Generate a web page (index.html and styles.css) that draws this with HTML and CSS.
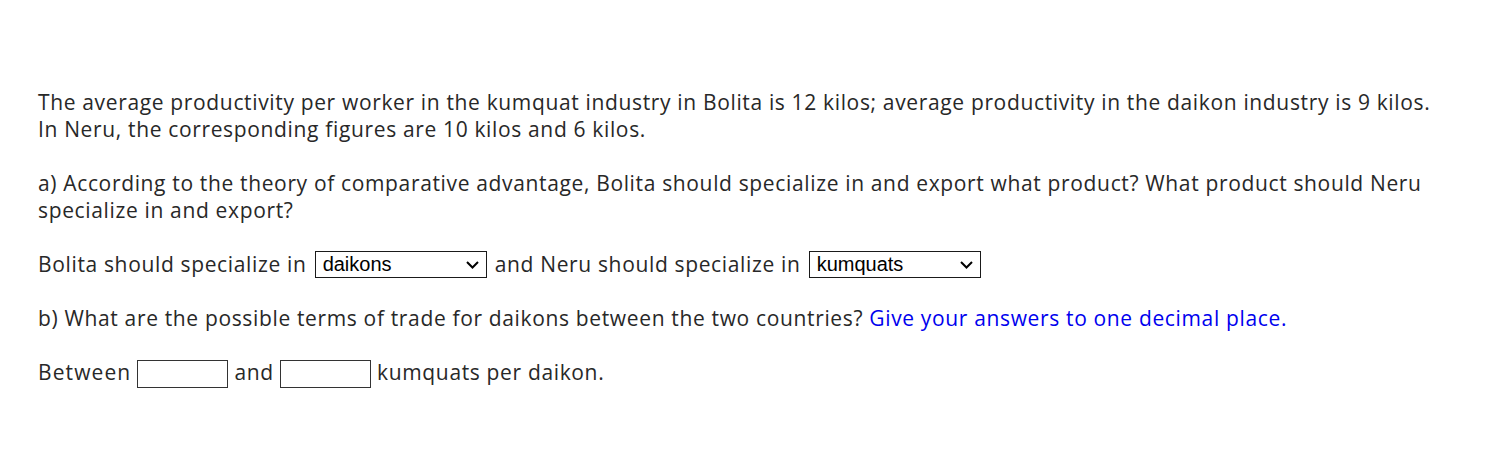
FILE: index.html
```html
<!DOCTYPE html>
<html>
<head>
<meta charset="utf-8">
<link rel="stylesheet" href="styles.css">
</head>
<body>
<div class="question">
  <p>The average productivity per worker in the kumquat industry in Bolita is 12 kilos; average productivity in the daikon industry is 9 kilos.<br>In Neru, the corresponding figures are 10 kilos and 6 kilos.</p>
  <p>a) According to the theory of comparative advantage, Bolita should specialize in and export what product? What product should Neru specialize in and export?</p>
  <p>Bolita should specialize in <span class="ddwrap"><select class="dd"><option>daikons</option><option>kumquats</option></select><svg class="chev" width="13" height="8" viewBox="0 0 13 8"><path d="M1 1 L6.5 6.5 L12 1" fill="none" stroke="#000" stroke-width="2"/></svg></span> and Neru should specialize in <span class="ddwrap"><select class="dd"><option>kumquats</option><option>daikons</option></select><svg class="chev" width="13" height="8" viewBox="0 0 13 8"><path d="M1 1 L6.5 6.5 L12 1" fill="none" stroke="#000" stroke-width="2"/></svg></span></p>
  <p>b) What are the possible terms of trade for daikons between the two countries? <span class="hint">Give your answers to one decimal place.</span></p>
  <p><span class="lead">Between</span> <input class="num" type="text"> and <input class="num" type="text"> kumquats per daikon.</p>
</div>
</body>
</html>
```

FILE: styles.css
```css
html, body {
  margin: 0;
  padding: 0;
  background: #ffffff;
}
.question {
  padding: 89px 40px 0 38px;
  font-family: "Open Sans", "Liberation Sans", sans-serif;
  font-size: 21px;
  letter-spacing: 0.65px;
  line-height: 27px;
  color: #282828;
}
.question p {
  margin: 0 0 27px 0;
}
.hint {
  color: #0000ee;
}
.lead {
  letter-spacing: 1.1px;
}
.ddwrap {
  position: relative;
  display: inline-block;
  vertical-align: middle;
  margin: -3px 2px 0 2px;
  letter-spacing: 0;
}
.dd {
  -webkit-appearance: none;
  appearance: none;
  display: block;
  font-family: "Liberation Sans", Arial, sans-serif;
  font-size: 20px;
  letter-spacing: 0;
  width: 172px;
  height: 27px;
  box-sizing: border-box;
  border: 1px solid #1a1a1a;
  border-radius: 0;
  background: #fff;
  color: #000;
  padding: 0 24px 0 7px;
  line-height: 25px;
}
.chev {
  position: absolute;
  right: 8px;
  top: 10px;
  pointer-events: none;
}
.num {
  width: 91px;
  height: 28px;
  box-sizing: border-box;
  border: 1px solid #333;
  border-radius: 0;
  padding: 0 4px;
  vertical-align: middle;
  margin-top: -1px;
  font-size: 18px;
}
```
